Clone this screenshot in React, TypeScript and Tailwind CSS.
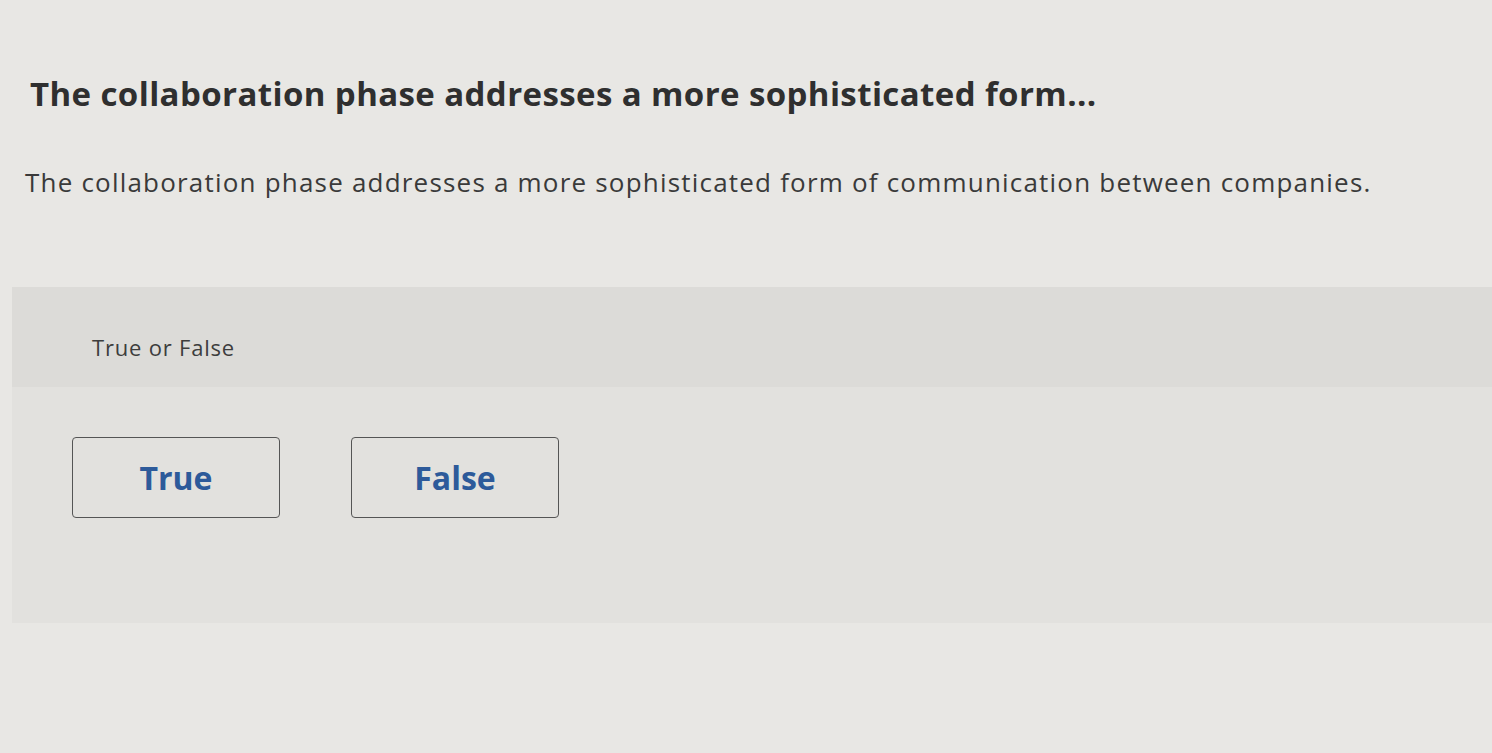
import React from 'react';

const choices = ['True', 'False'];

export default function App() {
  return (
    <div className="min-h-[753px] w-full bg-[#e8e7e4] font-['Open_Sans',sans-serif] text-[#333]">
      <div className="pt-[73px] pl-[30px]">
        <h1 className="text-[33px] font-bold leading-[42px] tracking-[0.4px] text-[#2f2f2f]">
          The collaboration phase addresses a more sophisticated form...
        </h1>
        <p className="mt-[50px] -ml-[5px] text-[26px] leading-[34px] tracking-[1.2px] text-[#3a3a3a]">
          The collaboration phase addresses a more sophisticated form of communication between companies.
        </p>
      </div>

      <div className="mt-[88px] ml-[12px] h-[100px] bg-[#dcdbd8] pl-[80px] pt-[46px]">
        <span className="text-[22px] leading-[28px] tracking-[0.8px] text-[#3d3d3d]">True or False</span>
      </div>

      <div className="ml-[12px] h-[236px] bg-[#e2e1de] pl-[60px] pt-[50px]">
        <div className="flex gap-[71px]">
          {choices.map((c) => (
            <button
              key={c}
              className="flex h-[81px] w-[208px] items-center justify-center rounded-[4px] border-[1.5px] border-[#555] text-[32px] font-bold text-[#2d5a9a]"
            >
              {c}
            </button>
          ))}
        </div>
      </div>
    </div>
  );
}
